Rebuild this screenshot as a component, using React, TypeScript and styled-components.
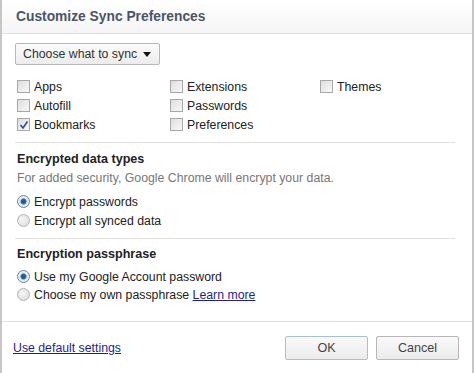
import React from "react";
import styled, { createGlobalStyle } from "styled-components";

const GlobalStyle = createGlobalStyle`
  html, body {
    margin: 0;
    padding: 0;
    background: #ffffff;
  }
  body {
    font-family: "Liberation Sans", Arial, sans-serif;
  }
`;

const Dialog = styled.div`
  width: 474px;
  height: 373px;
  box-sizing: border-box;
  border-left: 2px solid #c6c6c6;
  border-right: 2px solid #c6c6c6;
  background: #ffffff;
  display: flex;
  flex-direction: column;
  font-size: 12.3px;
  color: #222;
`;

const Header = styled.header`
  height: 34px;
  box-sizing: border-box;
  padding-left: 14px;
  display: flex;
  align-items: center;
  background: linear-gradient(#ffffff, #f5f5f5);
  border-bottom: 1px solid #e1e1e1;
`;

const Title = styled.h1`
  margin: 0;
  font-size: 13.8px;
  font-weight: bold;
  color: #4b5565;
`;

const Body = styled.main`
  flex: 1;
  padding: 9px 13px 0 13px;
  display: flex;
  flex-direction: column;
`;

const Select = styled.div`
  align-self: flex-start;
  width: 145px;
  height: 22px;
  box-sizing: border-box;
  border: 1px solid #b9b9b9;
  border-radius: 2px;
  background: linear-gradient(#fbfbfb, #ececec);
  display: flex;
  align-items: center;
  justify-content: space-between;
  padding: 0 8px 0 7px;
  color: #333;
`;

const Arrow = styled.span`
  width: 0;
  height: 0;
  border-left: 4px solid transparent;
  border-right: 4px solid transparent;
  border-top: 5px solid #111;
`;

const TypeGrid = styled.div`
  margin-top: 12px;
  display: grid;
  grid-template-columns: 153px 150px 1fr;
  grid-auto-rows: 19px;
`;

const Option = styled.label<{ $h?: number }>`
  display: flex;
  align-items: center;
  gap: 4px;
  height: ${(p) => p.$h ?? 19}px;
  color: #222;
`;

const Box = styled.span`
  width: 11px;
  height: 11px;
  border: 1px solid #a8a8a8;
  background: linear-gradient(135deg, #dedede, #f8f8f8);
  display: flex;
  align-items: center;
  justify-content: center;
  margin-left: 2px;
`;

const Radio = styled.span<{ $on?: boolean }>`
  width: 11px;
  height: 11px;
  border-radius: 50%;
  border: 1px solid ${(p) => (p.$on ? "#6b8199" : "#b4b4b4")};
  background: ${(p) =>
    p.$on
      ? "radial-gradient(circle at 50% 50%, #1d4f7d 0, #2f6da3 2.5px, #dfe8f0 3.5px, #eef2f6 6px)"
      : "radial-gradient(circle at 40% 40%, #f6f6f6, #d8d8d8)"};
  margin-left: 2px;
`;

const Rule = styled.hr<{ $top: number }>`
  border: 0;
  border-top: 1px solid #e3e3e3;
  margin: ${(p) => p.$top}px 4px 0 0;
`;

const Heading = styled.h2<{ $top?: number }>`
  margin: ${(p) => p.$top ?? 8}px 0 0 2px;
  font-size: 12.6px;
  font-weight: bold;
  color: #222;
  line-height: 16px;
`;

const Note = styled.p`
  margin: 3px 0 0 2px;
  color: #777;
  line-height: 16px;
`;

const RadioGroup = styled.div<{ $top: number }>`
  margin-top: ${(p) => p.$top}px;
  display: flex;
  flex-direction: column;
`;

const Link = styled.a`
  color: #1f1f8f;
  text-decoration: underline;
  cursor: pointer;
`;

const Footer = styled.footer`
  height: 52px;
  box-sizing: border-box;
  border-top: 1px solid #e3e3e3;
  display: flex;
  align-items: center;
  padding: 0 13px 0 11px;
  gap: 8px;
`;

const Spacer = styled.div`
  flex: 1;
`;

const Button = styled.button<{ $primary?: boolean }>`
  width: 83px;
  height: 24px;
  margin-top: 1px;
  font-family: inherit;
  font-size: 12.6px;
  color: #444;
  border-radius: 2px;
  border: 1px solid ${(p) => (p.$primary ? "#a9bfd6" : "#b7b7b7")};
  background: linear-gradient(#fafafa, #ebebeb);
`;

const Check = () => (
  <svg width="10" height="10" viewBox="0 0 10 10">
    <path d="M1.5 5 L4 8 L8.5 1.5" fill="none" stroke="#2b4f8c" strokeWidth="1.6" />
  </svg>
);

const types: [string, boolean][] = [
  ["Apps", false],
  ["Extensions", false],
  ["Themes", false],
  ["Autofill", false],
  ["Passwords", false],
  ["", false],
  ["Bookmarks", true],
  ["Preferences", false],
];

export default function App() {
  return (
    <>
      <GlobalStyle />
      <Dialog>
        <Header>
          <Title>Customize Sync Preferences</Title>
        </Header>
        <Body>
          <Select>
            <span>Choose what to sync</span>
            <Arrow />
          </Select>
          <TypeGrid>
            {types.map(([name, on], i) =>
              name ? (
                <Option key={i}>
                  <Box>{on && <Check />}</Box>
                  {name}
                </Option>
              ) : (
                <span key={i} />
              )
            )}
          </TypeGrid>
          <Rule $top={8} />
          <Heading>Encrypted data types</Heading>
          <Note>For added security, Google Chrome will encrypt your data.</Note>
          <RadioGroup $top={6}>
            <Option>
              <Radio $on />
              Encrypt passwords
            </Option>
            <Option>
              <Radio />
              Encrypt all synced data
            </Option>
          </RadioGroup>
          <Rule $top={8} />
          <Heading $top={7}>Encryption passphrase</Heading>
          <RadioGroup $top={5}>
            <Option>
              <Radio $on />
              Use my Google Account password
            </Option>
            <Option $h={17}>
              <Radio />
              <span>
                Choose my own passphrase <Link>Learn more</Link>
              </span>
            </Option>
          </RadioGroup>
        </Body>
        <Footer>
          <Link>Use default settings</Link>
          <Spacer />
          <Button $primary>OK</Button>
          <Button>Cancel</Button>
        </Footer>
      </Dialog>
    </>
  );
}
